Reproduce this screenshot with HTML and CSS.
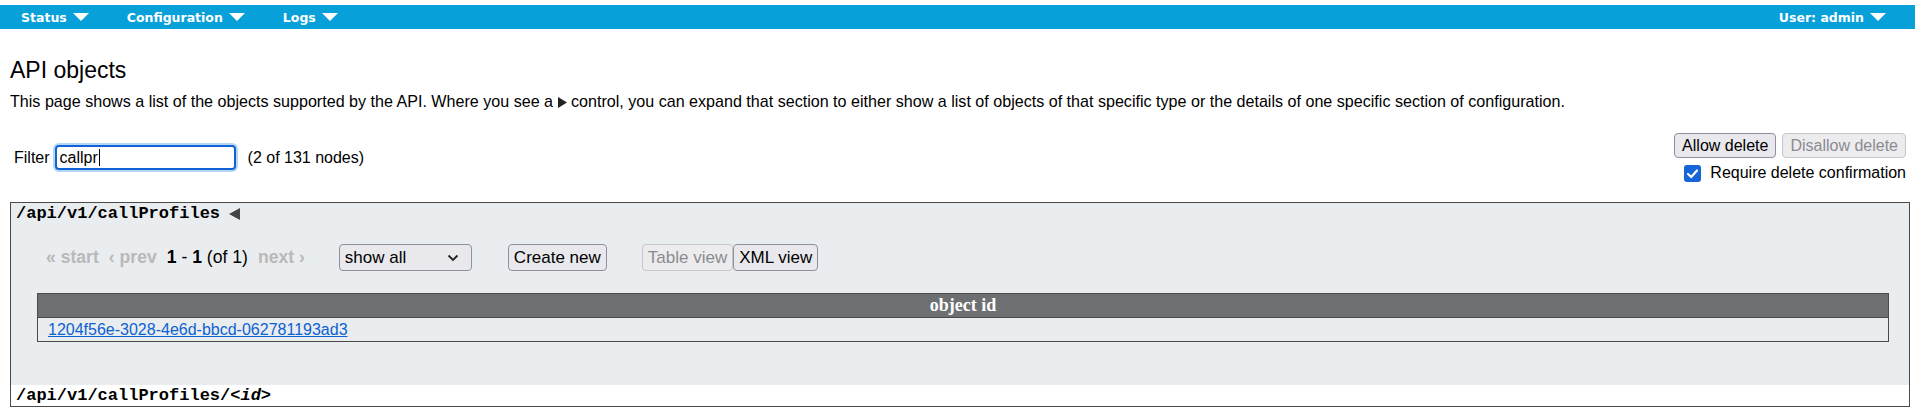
FILE: index.html
```html
<!DOCTYPE html>
<html lang="en">
<head>
<meta charset="utf-8">
<title>API objects</title>
<link rel="stylesheet" href="styles.css">
</head>
<body>
<header class="topbar">
  <nav class="menu">
    <span class="menu-item">Status <svg class="caret-down" viewBox="0 0 16 8"><polygon points="0,0 16,0 8,8" fill="#fff"/></svg></span>
    <span class="menu-item">Configuration <svg class="caret-down" viewBox="0 0 16 8"><polygon points="0,0 16,0 8,8" fill="#fff"/></svg></span>
    <span class="menu-item">Logs <svg class="caret-down" viewBox="0 0 16 8"><polygon points="0,0 16,0 8,8" fill="#fff"/></svg></span>
  </nav>
  <span class="menu-item">User: admin <svg class="caret-down" viewBox="0 0 16 8"><polygon points="0,0 16,0 8,8" fill="#fff"/></svg></span>
</header>

<main class="content">
  <h1 class="title">API objects</h1>
  <p class="desc">This page shows a list of the objects supported by the API. Where you see a <svg class="tri" viewBox="0 0 9 11"><polygon points="0,0 9,5.5 0,11" fill="#222"/></svg> control, you can expand that section to either show a list of objects of that specific type or the details of one specific section of configuration.</p>

  <div class="filter-row">
    <div class="filter">
      <label class="filter-label" for="flt">Filter</label>
      <div class="filter-input" id="flt">callpr<span class="text-caret"></span></div>
      <span class="filter-count">(2 of 131 nodes)</span>
    </div>
    <div class="delete-ctrls">
      <div class="delete-btns">
        <button class="btn btn-wide">Allow delete</button>
        <button class="btn btn-wide" disabled>Disallow delete</button>
      </div>
      <label class="confirm">
        <span class="checkbox"><svg viewBox="0 0 17 17"><polyline points="4,9 7.2,12 13,5.5" fill="none" stroke="#fff" stroke-width="2.2" stroke-linecap="round" stroke-linejoin="round"/></svg></span>
        Require delete confirmation
      </label>
    </div>
  </div>

  <section class="panel">
    <div class="node-title">/api/v1/callProfiles<svg class="collapse" viewBox="0 0 11 12"><polygon points="11,0 11,12 0,6" fill="#444"/></svg></div>
    <div class="node-body">
      <div class="pager">
        <span class="pg-off">&laquo; start</span>
        <span class="pg-off">&lsaquo; prev</span>
        <span class="pg-cur"><b>1</b> - <b>1</b> (of 1)</span>
        <span class="pg-off">next &rsaquo;</span>
        <div class="select">
          <span>show all</span>
          <svg class="chev" viewBox="0 0 12 8"><polyline points="1.5,1.5 6,6 10.5,1.5" fill="none" stroke="#222" stroke-width="1.8"/></svg>
        </div>
        <button class="btn btn-create">Create new</button>
        <div class="views">
          <button class="btn" disabled>Table view</button>
          <button class="btn">XML view</button>
        </div>
      </div>
      <table class="objects">
        <thead><tr><th>object id</th></tr></thead>
        <tbody><tr><td><a href="#">1204f56e-3028-4e6d-bbcd-062781193ad3</a></td></tr></tbody>
      </table>
    </div>
    <div class="node-title plain">/api/v1/callProfiles/&lt;<i>id</i>&gt;</div>
  </section>
</main>
</body>
</html>
```

FILE: styles.css
```css
* { box-sizing: border-box; }

body {
  margin: 0;
  font-family: "Liberation Sans", Arial, sans-serif;
  font-size: 16px;
  color: #000;
  background: #fff;
}

.topbar {
  margin-top: 5px;
  height: 24px;
  background: #07a0d8;
  color: #fff;
  display: flex;
  justify-content: space-between;
  align-items: center;
  padding: 0 29px 0 21px;
  font-family: "DejaVu Sans", sans-serif;
  font-weight: bold;
  font-size: 12.5px;
}

.menu { display: flex; gap: 38px; }
.menu-item { display: flex; align-items: center; gap: 6px; white-space: nowrap; }
.caret-down { width: 16px; height: 8px; display: block; }

.content { padding: 0 5px 0 10px; }

.title {
  margin: 28px 0 0;
  font-size: 23px;
  line-height: 26px;
  font-weight: normal;
}

.desc {
  margin: 9px 0 0;
  line-height: 18px;
  font-size: 16.1px;
}
.tri { width: 9px; height: 11px; vertical-align: -1px; }

.filter-row {
  margin-top: 23px;
  padding-right: 4px;
  display: flex;
  justify-content: space-between;
  align-items: center;
}

.filter { display: flex; align-items: center; padding-left: 4px; }
.filter-label { margin-right: 5px; }
.filter-input {
  width: 181px;
  height: 25px;
  border: 2px solid #1163d6;
  border-radius: 4px;
  box-shadow: 0 0 0 2px #b5d7f4;
  padding-left: 3px;
  display: flex;
  align-items: center;
  background: #fff;
}
.text-caret { width: 1px; height: 17px; background: #000; margin-left: 1px; }
.filter-count { margin-left: 12px; }

.delete-ctrls { display: flex; flex-direction: column; align-items: flex-end; }
.delete-btns { display: flex; gap: 6px; }

.btn {
  font-family: "Liberation Sans", Arial, sans-serif;
  font-size: 17px;
  color: #000;
  background: #e9e9ed;
  border: 1px solid #8f8f9d;
  border-radius: 4px;
  height: 27px;
  padding: 0 5px;
  margin: 0;
}
.btn:disabled { color: #8b8b8f; border-color: #c6c6cc; background: #ececef; }
.btn-wide { height: 25px; padding: 0 7px; font-size: 16px; }

.confirm { margin-top: 6px; height: 18px; display: flex; align-items: center; }
.checkbox {
  width: 17px;
  height: 17px;
  border-radius: 3px;
  background: #1565d8;
  margin-right: 9px;
  display: block;
}
.checkbox svg { width: 17px; height: 17px; display: block; }

.panel {
  margin-top: 20px;
  border: 1px solid #4a4a4a;
  background: #e9edef;
}

.node-title {
  height: 22px;
  line-height: 22px;
  padding-left: 5px;
  font-family: "Liberation Mono", "Courier New", monospace;
  font-weight: bold;
  font-size: 17px;
  display: flex;
  align-items: center;
}
.node-title.plain { background: #fff; height: 21px; line-height: 21px; }
.collapse { width: 11px; height: 12px; margin-left: 9px; }

.node-body { padding: 19px 20px 43px 26px; }

.pager { display: flex; align-items: center; height: 27px; padding-left: 9px; font-size: 17.6px; }
.pg-off { color: #b9b9b9; font-weight: bold; margin-right: 10px; }
.pg-cur { margin-right: 10px; }

.select {
  width: 133px;
  height: 27px;
  margin-left: 24px;
  border: 1px solid #8f8f9d;
  border-radius: 4px;
  background: #e9e9ed;
  display: flex;
  align-items: center;
  justify-content: space-between;
  padding: 0 12px 0 5px;
  font-size: 17px;
}
.chev { width: 12px; height: 8px; }

.btn-create { margin-left: 36px; }
.views { display: flex; margin-left: 35px; }

.objects {
  width: 100%;
  margin-top: 22px;
  border-collapse: collapse;
  border: 1px solid #4a4a4a;
}
.objects th {
  background: #6d7073;
  color: #fff;
  font-family: "Liberation Serif", "Times New Roman", serif;
  font-weight: bold;
  font-size: 18px;
  height: 24px;
  padding: 0;
  border-bottom: 1px solid #4a4a4a;
}
.objects td { height: 24px; padding: 0 10px; }
.objects a { color: #0e62cf; }
```
